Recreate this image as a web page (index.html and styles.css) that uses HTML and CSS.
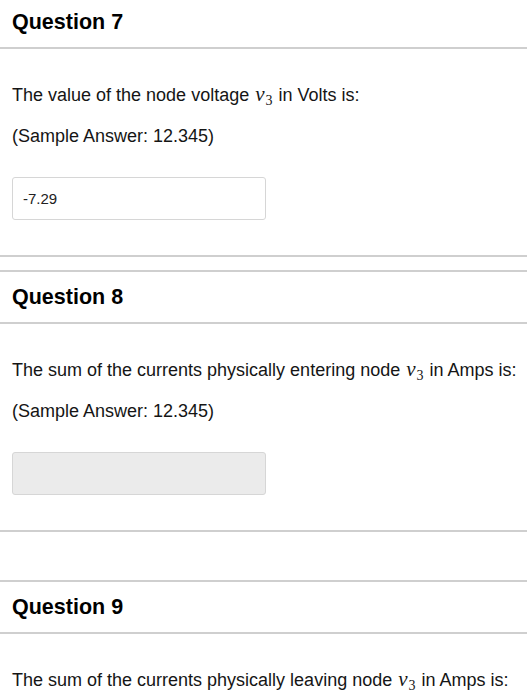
FILE: index.html
```html
<!DOCTYPE html>
<html lang="en">
<head>
<meta charset="utf-8">
<title>Quiz</title>
<link rel="stylesheet" href="styles.css">
</head>
<body>
<div class="quiz">
  <section class="question question--first">
    <header class="question-header"><h2 class="question-title">Question 7</h2></header>
    <div class="question-body">
      <p class="prompt">The value of the node voltage <span class="math"><i class="var">v</i><sub class="sub">3</sub></span> in Volts is:</p>
      <p class="prompt prompt--sample">(Sample Answer: 12.345)</p>
      <input class="answer" type="text" value="-7.29">
    </div>
  </section>
  <section class="question question--spaced">
    <header class="question-header"><h2 class="question-title">Question 8</h2></header>
    <div class="question-body">
      <p class="prompt">The sum of the currents physically entering node <span class="math"><i class="var">v</i><sub class="sub">3</sub></span> in Amps is:</p>
      <p class="prompt prompt--sample">(Sample Answer: 12.345)</p>
      <input class="answer answer--empty" type="text" value="" disabled>
    </div>
  </section>
  <section class="question">
    <header class="question-header"><h2 class="question-title">Question 9</h2></header>
    <div class="question-body">
      <p class="prompt">The sum of the currents physically leaving node <span class="math"><i class="var">v</i><sub class="sub">3</sub></span> in Amps is:</p>
    </div>
  </section>
</div>
</body>
</html>
```
FILE: styles.css
```css
html, body {
  margin: 0;
  padding: 0;
  background: #fff;
}
body {
  font-family: "Liberation Sans", Arial, sans-serif;
  color: #151515;
  overflow: hidden;
}
.quiz {
  display: flex;
  flex-direction: column;
}
.question {
  border-top: 2px solid #cfcfcf;
  border-bottom: 2px solid #cfcfcf;
  margin-bottom: 13px;
}
.question--first {
  margin-top: -5px;
}
.question--spaced {
  margin-bottom: 48px;
}
.question-header {
  padding: 12px 12px;
  border-bottom: 2px solid #cfcfcf;
}
.question-title {
  margin: 0;
  font-size: 21.5px;
  line-height: 26px;
  font-weight: bold;
  color: #000;
}
.question-body {
  padding: 33px 12px 35px;
  display: flex;
  flex-direction: column;
  align-items: flex-start;
}
.prompt {
  margin: 0;
  font-size: 18px;
  line-height: 24px;
  white-space: nowrap;
}
.prompt--sample {
  margin-top: 17px;
}
.math {
  font-family: "Liberation Serif", "Times New Roman", serif;
  font-size: 21px;
  margin: 0 1px;
}
.var {
  font-style: italic;
}
.sub {
  font-size: 14px;
  font-style: normal;
  vertical-align: -4px;
  line-height: 0;
  margin-left: 1px;
}
.answer {
  margin-top: 29px;
  box-sizing: border-box;
  width: 254px;
  height: 43px;
  border: 1px solid #d6d6d6;
  border-radius: 3px;
  padding: 0 10px;
  font-family: "Liberation Sans", Arial, sans-serif;
  font-size: 15px;
  color: #222;
  background: #fff;
  outline: none;
}
.answer--empty {
  background: #ebebeb;
}
```
